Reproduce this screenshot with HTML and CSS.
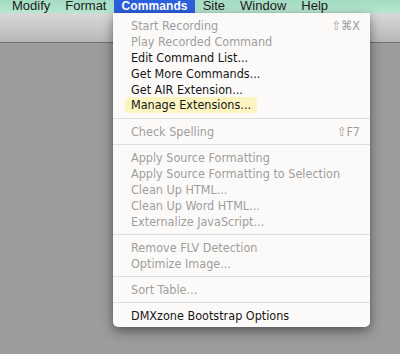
FILE: index.html
```html
<!DOCTYPE html>
<html>
<head>
<meta charset="utf-8">
<link rel="stylesheet" href="styles.css">
</head>
<body>
<div class="screen">
  <div class="menubar">
    <span class="mb-item">Modify</span>
    <span class="mb-item">Format</span>
    <span class="mb-item active">Commands</span>
    <span class="mb-item">Site</span>
    <span class="mb-item">Window</span>
    <span class="mb-item">Help</span>
  </div>
  <div class="toolbar"></div>
  <div class="workspace"></div>

  <div class="menu">
    <div class="item dis"><span>Start Recording</span><span class="key">⇧⌘X</span></div>
    <div class="item dis"><span>Play Recorded Command</span></div>
    <div class="item"><span>Edit Command List...</span></div>
    <div class="item"><span>Get More Commands...</span></div>
    <div class="item"><span>Get AIR Extension...</span></div>
    <div class="item"><span class="hl">Manage Extensions...</span></div>
    <div class="sep"></div>
    <div class="item dis"><span>Check Spelling</span><span class="key">⇧F7</span></div>
    <div class="sep"></div>
    <div class="item dis"><span>Apply Source Formatting</span></div>
    <div class="item dis"><span>Apply Source Formatting to Selection</span></div>
    <div class="item dis"><span>Clean Up HTML...</span></div>
    <div class="item dis"><span>Clean Up Word HTML...</span></div>
    <div class="item dis"><span>Externalize JavaScript...</span></div>
    <div class="sep"></div>
    <div class="item dis"><span>Remove FLV Detection</span></div>
    <div class="item dis"><span>Optimize Image...</span></div>
    <div class="sep"></div>
    <div class="item dis"><span>Sort Table...</span></div>
    <div class="sep"></div>
    <div class="item"><span>DMXzone Bootstrap Options</span></div>
  </div>
</div>
</body>
</html>
```

FILE: styles.css
```css
html, body {
  margin: 0;
  padding: 0;
}
body {
  width: 400px;
  height: 354px;
  overflow: hidden;
  background: #9c9c9c;
  font-family: "DejaVu Sans", "Liberation Sans", sans-serif;
}
.screen {
  position: relative;
  width: 400px;
  height: 354px;
  display: flex;
  flex-direction: column;
}
.menubar {
  height: 13px;
  display: flex;
  padding-left: 4.5px;
  overflow: hidden;
  background: linear-gradient(#a4dcc2, #b6e6d0);
  font-family: "Liberation Sans", Arial, sans-serif;
}
.mb-item {
  height: 13px;
  line-height: 12px;
  padding: 0 7.5px;
  font-size: 13px;
  color: #1c1c1c;
}
.mb-item.active {
  background: #2c5fdc;
  color: #fff;
  font-weight: bold;
  font-size: 12px;
  letter-spacing: 0.1px;
}
.toolbar {
  height: 29px;
  background: linear-gradient(#d8d8d8, #c6c6c6 60%, #b6b6b6);
  border-bottom: 1px solid #707070;
}
.workspace {
  flex: 1;
  background: #9c9c9c;
}
.menu {
  position: absolute;
  left: 113px;
  top: 13px;
  width: 257px;
  padding: 4px 0 4px;
  background: #fcfaf8;
  border-radius: 0 0 5px 5px;
  box-shadow: 0 4px 12px rgba(0, 0, 0, 0.45), 0 0 1px rgba(0, 0, 0, 0.3);
  font-family: "DejaVu Sans Condensed", "DejaVu Sans", sans-serif;
}
.item {
  height: 16px;
  display: flex;
  align-items: center;
  justify-content: space-between;
  padding: 0 10px 0 18px;
  font-size: 12.5px;
  color: #161616;
  white-space: nowrap;
}
.item.dis {
  color: #9e9e9e;
}
.key {
  font-size: 12.5px;
  color: #9e9e9e;
}
.hl {
  background: #fcf5c2;
  border-radius: 4px;
  padding: 0 6px;
  margin-left: -6px;
  line-height: 16px;
}
.sep {
  height: 10px;
  display: flex;
  align-items: center;
}
.sep::after {
  content: "";
  display: block;
  width: 100%;
  height: 1px;
  background: #dedee2;
}
```
